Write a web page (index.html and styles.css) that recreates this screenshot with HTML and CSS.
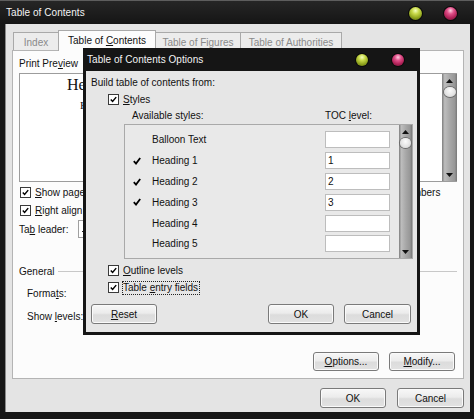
FILE: index.html
```html
<!DOCTYPE html>
<html>
<head>
<meta charset="utf-8">
<link rel="stylesheet" href="styles.css">
</head>
<body>
<div class="win">
  <div class="titlebar">
    <span class="title">Table of Contents</span>
    <span class="orbs"><i class="orb green"></i><i class="orb pink"></i></span>
  </div>
  <div class="client">
    <div class="tabs">
      <div class="tab t-index"><span>Index</span></div>
      <div class="tab active t-toc"><span>Table of <u>C</u>ontents</span></div>
      <div class="tab t-fig"><span>Table of Figures</span></div>
      <div class="tab t-auth"><span>Table of Authorities</span></div>
    </div>
    <div class="panel">
      <div class="cols">
        <div class="col">
          <div class="lbl">Print Pre<u>v</u>iew</div>
          <div class="preview">
            <div class="pv1">Heading 1</div>
            <div class="pv2">Heading 2</div>
            <div class="pv3">Heading 3</div>
          </div>
          <div class="chk first"><span class="cb on"><svg viewBox="0 0 11 11"><path d="M2.2 5.4 L4.4 7.8 L8.8 2.6"/></svg></span><span><u>S</u>how page numbers</span></div>
          <div class="chk"><span class="cb on"><svg viewBox="0 0 11 11"><path d="M2.2 5.4 L4.4 7.8 L8.8 2.6"/></svg></span><span><u>R</u>ight align page numbers</span></div>
          <div class="leader"><span>Ta<u>b</u> leader:</span><span class="select"><i class="dots"></i></span></div>
        </div>
        <div class="col">
          <div class="lbl">Web Preview</div>
          <div class="webbox">
            <div class="webtext">Heading 1</div>
            <div class="vscroll">
              <svg class="arr up" viewBox="0 0 7 4"><path d="M0 4 L3.5 0 L7 4Z"/></svg>
              <span class="thumb"></span>
              <svg class="arr down" viewBox="0 0 7 4"><path d="M0 0 L7 0 L3.5 4Z"/></svg>
            </div>
          </div>
          <div class="chk first"><span class="cb on"><svg viewBox="0 0 11 11"><path d="M2.2 5.4 L4.4 7.8 L8.8 2.6"/></svg></span><span>Use hyperlinks instead of page numbers</span></div>
        </div>
      </div>
      <div class="general"><span>General</span><span class="rule"></span></div>
      <div class="field f1"><span>Forma<u>t</u>s:</span><span class="select wide"></span></div>
      <div class="field f2"><span>Show <u>l</u>evels:</span><span class="select spin"></span></div>
      <div class="panel-btns">
        <button class="btn"><u>O</u>ptions...</button>
        <button class="btn"><u>M</u>odify...</button>
      </div>
    </div>
    <div class="footer">
      <button class="btn big">OK</button>
      <button class="btn big w67">Cancel</button>
    </div>
  </div>

  <div class="dlg">
    <div class="dlg-title">
      <span class="title">Table of Contents Options</span>
      <span class="orbs small"><i class="orb green"></i><i class="orb pink"></i></span>
    </div>
    <div class="dlg-body">
      <div class="lbl">Build table of contents from:</div>
      <div class="chk styles"><span class="cb on"><svg viewBox="0 0 11 11"><path d="M2.2 5.4 L4.4 7.8 L8.8 2.6"/></svg></span><span><u>S</u>tyles</span></div>
      <div class="hdr"><span class="h-av">Available styles:</span><span>TOC <u>l</u>evel:</span></div>
      <div class="list">
        <div class="rows">
          <div class="row"><span class="mark"></span><span class="name">Balloon Text</span><span class="lvl"></span></div>
          <div class="row"><span class="mark"><svg viewBox="0 0 8 8"><path d="M0.8 4.2 L3 6.6 L7.2 1"/></svg></span><span class="name">Heading 1</span><span class="lvl">1</span></div>
          <div class="row"><span class="mark"><svg viewBox="0 0 8 8"><path d="M0.8 4.2 L3 6.6 L7.2 1"/></svg></span><span class="name">Heading 2</span><span class="lvl">2</span></div>
          <div class="row"><span class="mark"><svg viewBox="0 0 8 8"><path d="M0.8 4.2 L3 6.6 L7.2 1"/></svg></span><span class="name">Heading 3</span><span class="lvl">3</span></div>
          <div class="row"><span class="mark"></span><span class="name">Heading 4</span><span class="lvl"></span></div>
          <div class="row"><span class="mark"></span><span class="name">Heading 5</span><span class="lvl"></span></div>
        </div>
        <div class="vscroll inner">
          <svg class="arr up" viewBox="0 0 7 4"><path d="M0 4 L3.5 0 L7 4Z"/></svg>
          <span class="thumb"></span>
          <svg class="arr down" viewBox="0 0 7 4"><path d="M0 0 L7 0 L3.5 4Z"/></svg>
        </div>
      </div>
      <div class="chk outline"><span class="cb on"><svg viewBox="0 0 11 11"><path d="M2.2 5.4 L4.4 7.8 L8.8 2.6"/></svg></span><span><u>O</u>utline levels</span></div>
      <div class="chk entry"><span class="cb on"><svg viewBox="0 0 11 11"><path d="M2.2 5.4 L4.4 7.8 L8.8 2.6"/></svg></span><span class="focus">Table <u>e</u>ntry fields</span></div>
      <div class="dlg-btns">
        <button class="btn big"><u>R</u>eset</button>
        <span class="grp">
          <button class="btn big">OK</button>
          <button class="btn big w67">Cancel</button>
        </span>
      </div>
    </div>
  </div>
</div>
</body>
</html>
```

FILE: styles.css
```css
html, body {
  margin: 0;
  padding: 0;
  background: #111;
}
body {
  font-family: "Liberation Sans", Arial, sans-serif;
  font-size: 10px;
  color: #111;
}
u { text-decoration: underline; text-underline-offset: 1px; }

.win {
  position: relative;
  width: 474px;
  height: 419px;
  box-sizing: border-box;
  background: #161616;
  padding: 0 4px 7px 5px;
  display: flex;
  flex-direction: column;
  overflow: hidden;
}

.titlebar {
  height: 24px;
  box-sizing: border-box;
  border-top: 1px solid #5e5e5e;
  margin: 0 -4px 0 -5px;
  padding: 0 0 0 6px;
  display: flex;
  align-items: center;
  justify-content: space-between;
  background: linear-gradient(#262626, #151515);
}
.title {
  color: #f4f4f4;
  font-size: 10px;
  letter-spacing: 0.05px;
}
.orbs {
  display: flex;
  gap: 22px;
  margin-right: 17px;
  margin-top: 1px;
}
.orb {
  display: block;
  width: 13px;
  height: 13px;
  border-radius: 50%;
  box-shadow: 0 0 0 1px #0a0a0a;
}
.orb.green {
  background: radial-gradient(circle at 50% 28%, #f4ffc0 0, #c8d94a 30%, #94a820 62%, #56640c 100%);
}
.orb.pink {
  background: radial-gradient(circle at 50% 28%, #ffd0e0 0, #e0508a 30%, #b3245a 62%, #6a0f32 100%);
}
.orbs.small { gap: 24px; margin-right: 13px; }
.orbs.small .orb { width: 12px; height: 12px; }

.client {
  flex: 1;
  background: #e4e4e4;
  display: flex;
  flex-direction: column;
  padding: 0 6px 0 7px;
  box-shadow: inset 1px 0 0 #8a8a8a;
}

.tabs {
  height: 26px;
  display: flex;
  align-items: flex-end;
  margin-left: 1px;
  position: relative;
  z-index: 2;
}
.tab {
  box-sizing: border-box;
  height: 18px;
  border: 1px solid #a9a9a9;
  border-bottom: none;
  background: #ececec;
  color: #8a8a8a;
  display: flex;
  align-items: center;
  justify-content: center;
  white-space: nowrap;
  padding-top: 1px;
}
.tab + .tab { margin-left: -1px; }
.t-index { width: 46px; }
.t-toc { width: 98px; }
.t-fig { width: 86px; }
.t-auth { width: 102px; }
.tab.active {
  height: 21px;
  margin-bottom: -1px;
  background: #fcfcfc;
  color: #111;
  padding-top: 0;
  padding-bottom: 1px;
}

.panel {
  box-sizing: border-box;
  height: 329px;
  border: 1px solid #b4b4b4;
  background: #fcfcfc;
  padding: 6px 6px 7px 6px;
  display: flex;
  flex-direction: column;
}
.cols {
  display: grid;
  grid-template-columns: 214px 211px;
  column-gap: 13px;
}
.lbl {
  height: 13px;
  line-height: 13px;
  white-space: nowrap;
}
.preview {
  box-sizing: border-box;
  margin-top: 3px;
  height: 109px;
  border: 1px solid #9c9c9c;
  background: #fff;
  padding: 2px 0 0 47px;
  font-family: "Liberation Serif", "Times New Roman", serif;
  white-space: nowrap;
  overflow: hidden;
}
.pv1 { font-size: 16px; line-height: 18px; }
.pv2 { font-size: 11px; line-height: 13px; margin-left: 13px; margin-top: 5px; }
.pv3 { font-size: 11px; line-height: 13px; margin-left: 26px; margin-top: 5px; }

.webbox {
  box-sizing: border-box;
  margin-top: 3px;
  height: 109px;
  border: 1px solid #9c9c9c;
  border-right: none;
  background: #fff;
  display: flex;
}
.webtext {
  flex: 1;
  padding: 4px 6px;
  color: #1a4fa0;
  text-decoration: underline;
}

.vscroll {
  position: relative;
  width: 15px;
  box-sizing: border-box;
  background: linear-gradient(to right, #7e7e7e, #bdbdbd 18%, #a6a6a6 55%, #979797 85%, #777);
  display: flex;
  flex-direction: column;
  align-items: center;
}
.vscroll .arr {
  width: 7px;
  height: 4px;
  fill: #111;
}
.vscroll .arr.up { margin-top: 5px; }
.vscroll .arr.down { margin-top: auto; margin-bottom: 4px; }
.vscroll .thumb {
  display: block;
  width: 12px;
  height: 10px;
  margin-top: 4px;
  border-radius: 6px / 5px;
  background: radial-gradient(ellipse at 50% 35%, #fbfbfb 0, #e2e2e2 60%, #bcbcbc 100%);
  box-shadow: 0 0 0 1px #6c6c6c;
}

.chk {
  display: flex;
  align-items: center;
  height: 18px;
  gap: 4px;
  white-space: nowrap;
  padding-left: 1px;
}
.chk.first { margin-top: 1px; }
.cb {
  box-sizing: border-box;
  width: 11px;
  height: 11px;
  border: 1px solid #3a3a3a;
  background: #fff;
  display: block;
  flex: none;
}
.cb svg {
  display: block;
  width: 9px;
  height: 9px;
  fill: none;
  stroke: #000;
  stroke-width: 1.8;
}
.leader {
  margin-top: 1px;
  height: 18px;
  display: flex;
  align-items: center;
  gap: 0;
}
.leader span:first-child { width: 59px; }
.select {
  box-sizing: border-box;
  height: 18px;
  width: 110px;
  border: 1px solid #a0a0a0;
  background: #fff;
  padding-left: 3px;
  display: flex;
  align-items: center;
}
.dots {
  display: block;
  width: 40px;
  height: 1px;
  margin-top: 5px;
  background: repeating-linear-gradient(to right, #222 0 1px, transparent 1px 3px);
}

.general {
  margin-top: 27px;
  height: 13px;
  display: flex;
  align-items: center;
  gap: 3px;
}
.general .rule {
  flex: 1;
  height: 1px;
  background: #c8c8c8;
  margin-right: 0;
}
.field {
  margin-left: 8px;
  height: 18px;
  display: flex;
  align-items: center;
}
.field span:first-child { width: 60px; }
.f1 { margin-top: 6px; }
.f2 { margin-top: 5px; }
.select.wide { width: 140px; }
.select.spin { width: 50px; }

.panel-btns {
  margin-top: auto;
  display: flex;
  justify-content: flex-end;
  gap: 10px;
  margin-right: 2px;
}

.btn {
  box-sizing: border-box;
  width: 66px;
  height: 19px;
  padding: 0;
  font: inherit;
  color: #111;
  border: 1px solid #7a7a7a;
  border-radius: 3px;
  background: linear-gradient(#f7f7f7, #ececec 45%, #dcdcdc 55%, #e2e2e2);
  box-shadow: inset 0 0 0 1px #fafafa;
}
.btn.big { height: 20px; }
.btn.w67 { width: 67px; }

.footer {
  margin-top: 9px;
  display: flex;
  justify-content: flex-end;
  gap: 11px;
}

/* Options dialog overlay */
.dlg {
  position: absolute;
  left: 83px;
  top: 48px;
  width: 337px;
  height: 287px;
  box-sizing: border-box;
  background: #151515;
  padding: 0 3px 3px 3px;
  display: flex;
  flex-direction: column;
  z-index: 5;
}
.dlg-title {
  height: 23px;
  display: flex;
  align-items: center;
  justify-content: space-between;
  padding-left: 1px;
}
.dlg-body {
  flex: 1;
  background: #e6e6e6;
  padding: 5px 4px 0 5px;
  display: flex;
  flex-direction: column;
}
.chk.styles { margin-top: 2px; height: 17px; padding-left: 17px; }
.hdr {
  margin-top: 1px;
  height: 13px;
  line-height: 13px;
  display: flex;
  white-space: nowrap;
}
.h-av { margin-left: 41px; width: 193px; }
.list {
  margin-top: 2px;
  margin-left: 33px;
  width: 289px;
  height: 135px;
  box-sizing: border-box;
  border: 1px solid #a9a9a9;
  background: #e9e9e9;
  display: flex;
  overflow: hidden;
}
.rows {
  flex: 1;
  padding-top: 4.6px;
}
.row {
  height: 20.8px;
  display: flex;
  align-items: center;
}
.mark {
  width: 19px;
  margin-left: 8px;
  display: flex;
  align-items: center;
}
.mark svg {
  width: 8px;
  height: 8px;
  fill: none;
  stroke: #000;
  stroke-width: 1.8;
}
.name { width: 173px; white-space: nowrap; }
.lvl {
  box-sizing: border-box;
  width: 65px;
  height: 17px;
  border: 1px solid #bdbdbd;
  background: #fff;
  padding-left: 2px;
  display: flex;
  align-items: center;
}
.vscroll.inner { width: 13px; }
.vscroll.inner .thumb { width: 11px; }

.chk.outline { margin-top: 3px; height: 17px; padding-left: 17px; }
.chk.entry { height: 17px; padding-left: 17px; gap: 3px; }
.focus {
  border: 1px dotted #222;
  padding: 0 1px 0 0;
  line-height: 12px;
}
.dlg-btns {
  margin-top: 8px;
  display: flex;
  justify-content: space-between;
  padding-right: 2px;
}
.grp { display: flex; gap: 10px; }
```
